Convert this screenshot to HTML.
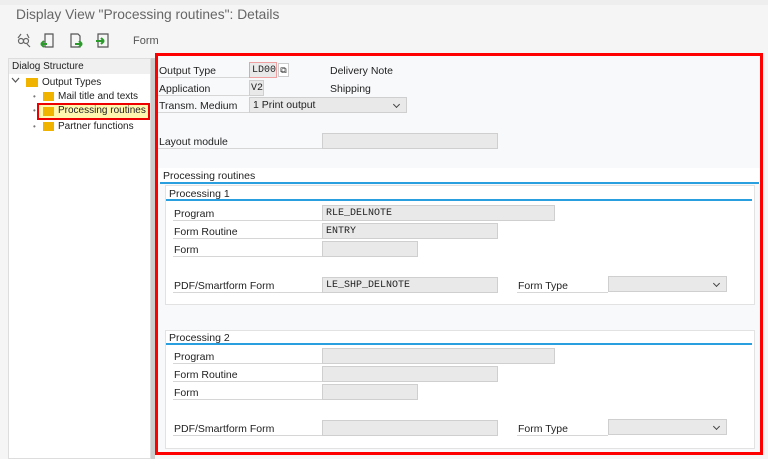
<!DOCTYPE html>
<html><head><meta charset="utf-8"><style>
*{margin:0;padding:0;box-sizing:border-box}
body{width:768px;height:459px;overflow:hidden;background:#f5f5f5;font-family:"Liberation Sans",Arial,sans-serif;font-size:10.5px;color:#222;position:relative}
.a{position:absolute;white-space:nowrap}
.t{font-size:10px}
.lbl{position:absolute;border-bottom:1px solid #d6d6d6;height:16px;line-height:18px;padding-left:1px}
.fld{position:absolute;background:#e9e9e9;border:1px solid #cfcfcf;height:16px;line-height:15px;font-family:"Liberation Mono",monospace;font-size:10px;padding-left:3px}
.dd::after{content:"";position:absolute;right:7px;top:4px;width:4px;height:4px;border-right:1.3px solid #444;border-bottom:1.3px solid #444;transform:rotate(45deg)}
.box{position:absolute;background:#fff;border:1px solid #e2e2e2}
.bl{position:absolute;height:2px;background:#2a9fe0}
</style></head><body>
<div class="a" style="left:0;top:0;width:768px;height:5px;background:#eee"></div>
<div class="a" style="left:16px;top:7px;font-size:13.8px;color:#666">Display View "Processing routines": Details</div>
<svg class="a" style="left:14px;top:31px" width="110" height="20">
<g fill="none" stroke="#666" stroke-width="1.2"><circle cx="7" cy="10" r="2.5"/><circle cx="12" cy="10" r="2.5"/><path d="M4 7l3-4M15 7l-2-4M13 13l3 3"/></g>
<g fill="none" stroke="#555" stroke-width="1.2"><path d="M31 3h8v13h-8z"/><path d="M57 3h7l2 2v11h-9z"/><path d="M84 3h10v13h-10z"/></g>
<path d="M27 13h6M27 13l3-3M27 13l3 3" stroke="#2a9a2a" stroke-width="2" fill="none"/>
<path d="M61 13h7M68 13l-3-3M68 13l-3 3" stroke="#2a9a2a" stroke-width="2" fill="none"/>
<path d="M82 10h8M90 10l-3-3M90 10l-3 3" stroke="#2a9a2a" stroke-width="2" fill="none"/>
</svg>
<div class="a" style="left:133px;top:35px;font-size:11px;color:#555">Form</div>
<div class="a" style="left:8px;top:58px;width:143px;height:401px;background:#fff;border:1px solid #ddd"></div>
<div class="a t" style="left:9px;top:59px;width:141px;height:15px;background:#f0f0f0;padding-left:3px;line-height:16px">Dialog Structure</div>
<svg class="a" style="left:11px;top:77px" width="9" height="7"><path d="M1 1l3.5 4 3.5-4" fill="none" stroke="#555" stroke-width="1.2"/></svg>
<div class="a" style="left:26px;top:78px;width:12px;height:9px;background:#f0b400"></div>
<div class="a t" style="left:42px;top:77px">Output Types</div>
<div class="a" style="left:33px;top:92px;color:#777;font-size:8px">•</div><div class="a" style="left:43px;top:92px;width:11px;height:9px;background:#f0b400"></div><div class="a t" style="left:58px;top:91px">Mail title and texts</div>
<div class="a" style="left:33px;top:106px;color:#777;font-size:8px">•</div>
<div class="a" style="left:37px;top:103px;width:113px;height:17px;border:2px solid #e00;background:#fff7b0"></div>
<div class="a" style="left:43px;top:107px;width:11px;height:9px;background:#f0b400"></div><div class="a t" style="left:58px;top:105px">Processing routines</div>
<div class="a" style="left:33px;top:122px;color:#777;font-size:8px">•</div><div class="a" style="left:43px;top:122px;width:11px;height:9px;background:#f0b400"></div><div class="a t" style="left:58px;top:121px">Partner functions</div>
<div class="a" style="left:151px;top:58px;width:4px;height:401px;background:#ccc"></div>
<div class="a" style="left:155px;top:53px;width:608px;height:402px;border:3px solid #f00;background:#f8f9fb"></div>
<div class="lbl" style="left:158px;top:62px;width:91px">Output Type</div>
<div class="fld" style="left:249px;top:62px;width:28px;border-color:#f0a0a0;padding-left:2px">LD00</div>
<div class="a" style="left:278px;top:63px;width:11px;height:14px;border:1px solid #ccc;background:#fff;font-size:9px;text-align:center;line-height:12px">⧉</div>
<div class="a" style="left:330px;top:65px">Delivery Note</div>
<div class="lbl" style="left:158px;top:80px;width:91px">Application</div>
<div class="fld" style="left:249px;top:80px;width:15px;padding-left:1px">V2</div>
<div class="a" style="left:330px;top:83px">Shipping</div>
<div class="lbl" style="left:158px;top:97px;width:91px">Transm. Medium</div>
<div class="fld dd" style="left:249px;top:97px;width:158px;font-family:'Liberation Sans',sans-serif;font-size:10.5px">1 Print output</div>
<div class="lbl" style="left:158px;top:133px;width:164px">Layout module</div>
<div class="fld" style="left:322px;top:133px;width:176px"></div>
<div class="a" style="left:158px;top:168px;width:602px;height:16px;background:#fff"></div>
<div class="a" style="left:163px;top:170px">Processing routines</div>
<div class="bl" style="left:160px;top:182px;width:599px"></div>
<div class="box" style="left:165px;top:185px;width:590px;height:120px"></div>
<div class="a" style="left:169px;top:188px">Processing 1</div>
<div class="bl" style="left:166px;top:199px;width:586px"></div>
<div class="lbl" style="left:173px;top:205px;width:149px">Program</div><div class="fld" style="left:322px;top:205px;width:233px">RLE_DELNOTE</div>
<div class="lbl" style="left:173px;top:223px;width:149px">Form Routine</div><div class="fld" style="left:322px;top:223px;width:176px">ENTRY</div>
<div class="lbl" style="left:173px;top:241px;width:149px">Form</div><div class="fld" style="left:322px;top:241px;width:96px"></div>
<div class="lbl" style="left:173px;top:277px;width:149px">PDF/Smartform Form</div><div class="fld" style="left:322px;top:277px;width:176px">LE_SHP_DELNOTE</div>
<div class="lbl" style="left:517px;top:277px;width:91px">Form Type</div><div class="fld dd" style="left:608px;top:276px;width:119px"></div>
<div class="box" style="left:165px;top:330px;width:590px;height:119px"></div>
<div class="a" style="left:169px;top:332px">Processing 2</div>
<div class="bl" style="left:166px;top:343px;width:586px"></div>
<div class="lbl" style="left:173px;top:348px;width:149px">Program</div><div class="fld" style="left:322px;top:348px;width:233px"></div>
<div class="lbl" style="left:173px;top:366px;width:149px">Form Routine</div><div class="fld" style="left:322px;top:366px;width:176px"></div>
<div class="lbl" style="left:173px;top:384px;width:149px">Form</div><div class="fld" style="left:322px;top:384px;width:96px"></div>
<div class="lbl" style="left:173px;top:420px;width:149px">PDF/Smartform Form</div><div class="fld" style="left:322px;top:420px;width:176px"></div>
<div class="lbl" style="left:517px;top:420px;width:91px">Form Type</div><div class="fld dd" style="left:608px;top:419px;width:119px"></div>
</body></html>
